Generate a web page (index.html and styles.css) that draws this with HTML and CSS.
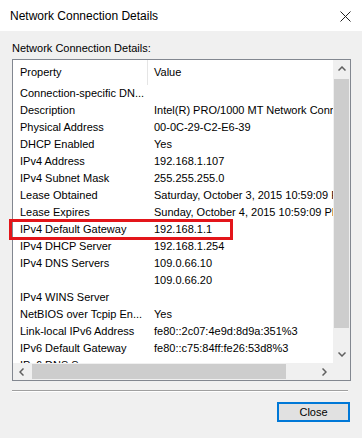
FILE: index.html
```
<!DOCTYPE html>
<html>
<head>
<meta charset="utf-8">
<link rel="stylesheet" href="styles.css">
</head>
<body>
<div class="window">
  <div class="titlebar">
    <span class="title">Network Connection Details</span>
    <svg class="close-x" width="11" height="11" viewBox="0 0 11 11"><path d="M0.5 0.5 L10.5 10.5 M10.5 0.5 L0.5 10.5" stroke="#222" stroke-width="1" fill="none"/></svg>
  </div>
  <div class="main">
    <div class="caption">Network Connection Details:</div>
    <div class="listview">
      <div class="lv-body">
        <div class="row header"><div class="c1">Property</div><div class="c2">Value</div></div>
        <div class="row"><div class="c1">Connection-specific DN...</div><div class="c2"></div></div>
        <div class="row"><div class="c1">Description</div><div class="c2">Intel(R) PRO/1000 MT Network Connection</div></div>
        <div class="row"><div class="c1">Physical Address</div><div class="c2">00-0C-29-C2-E6-39</div></div>
        <div class="row"><div class="c1">DHCP Enabled</div><div class="c2">Yes</div></div>
        <div class="row"><div class="c1">IPv4 Address</div><div class="c2">192.168.1.107</div></div>
        <div class="row"><div class="c1">IPv4 Subnet Mask</div><div class="c2">255.255.255.0</div></div>
        <div class="row"><div class="c1">Lease Obtained</div><div class="c2">Saturday, October 3, 2015 10:59:09 PM</div></div>
        <div class="row"><div class="c1">Lease Expires</div><div class="c2">Sunday, October 4, 2015 10:59:09 PM</div></div>
        <div class="row"><div class="c1">IPv4 Default Gateway</div><div class="c2">192.168.1.1</div></div>
        <div class="row"><div class="c1">IPv4 DHCP Server</div><div class="c2">192.168.1.254</div></div>
        <div class="row"><div class="c1">IPv4 DNS Servers</div><div class="c2">109.0.66.10</div></div>
        <div class="row"><div class="c1"></div><div class="c2">109.0.66.20</div></div>
        <div class="row"><div class="c1">IPv4 WINS Server</div><div class="c2"></div></div>
        <div class="row"><div class="c1">NetBIOS over Tcpip En...</div><div class="c2">Yes</div></div>
        <div class="row"><div class="c1">Link-local IPv6 Address</div><div class="c2">fe80::2c07:4e9d:8d9a:351%3</div></div>
        <div class="row"><div class="c1">IPv6 Default Gateway</div><div class="c2">fe80::c75:84ff:fe26:53d8%3</div></div>
        <div class="row"><div class="c1">IPv6 DNS Servers</div><div class="c2"></div></div>
      </div>
      <div class="vscroll">
        <div class="sbtn"><svg width="8" height="5" viewBox="0 0 8 5"><path d="M0.5 4.5 L4 1 L7.5 4.5" stroke="#606060" stroke-width="1.5" fill="none"/></svg></div>
        <div class="vthumb"></div>
        <div class="vspace"></div>
        <div class="sbtn"><svg width="8" height="5" viewBox="0 0 8 5"><path d="M0.5 0.5 L4 4 L7.5 0.5" stroke="#606060" stroke-width="1.5" fill="none"/></svg></div>
      </div>
      <div class="hscroll">
        <div class="sbtn"><svg width="5" height="8" viewBox="0 0 5 8"><path d="M4.5 0.5 L1 4 L4.5 7.5" stroke="#606060" stroke-width="1.5" fill="none"/></svg></div>
        <div class="hthumb"></div>
        <div class="hspace"></div>
        <div class="sbtn"><svg width="5" height="8" viewBox="0 0 5 8"><path d="M0.5 0.5 L4 4 L0.5 7.5" stroke="#606060" stroke-width="1.5" fill="none"/></svg></div>
      </div>
      <div class="corner"></div>
    </div>
    <div class="separator"></div>
    <div class="buttons"><button class="btn">Close</button></div>
  </div>
  <div class="highlight"></div>
</div>
</body>
</html>
```
FILE: styles.css
```
html, body {
  margin: 0;
  padding: 0;
}
body {
  width: 362px;
  height: 438px;
  overflow: hidden;
  background: #f0f0f0;
  font-family: "Liberation Sans", Arial, sans-serif;
  font-size: 11px;
  color: #000;
}
.window {
  position: relative;
  width: 362px;
  height: 438px;
}
.titlebar {
  height: 31px;
  background: #fff;
  display: flex;
  align-items: center;
  justify-content: space-between;
  padding: 0 11px 0 10px;
  box-sizing: border-box;
}
.title {
  font-size: 12px;
  color: #000;
}
.close-x {
  display: block;
  margin-top: 1px;
}
.main {
  padding: 11px 11px 0 12px;
}
.caption {
  line-height: 13px;
  height: 13px;
  margin-bottom: 4px;
}
.listview {
  width: 339px;
  height: 322px;
  box-sizing: border-box;
  border: 1px solid #828790;
  background: #fff;
  display: grid;
  grid-template-columns: 1fr 17px;
  grid-template-rows: 1fr 17px;
}
.lv-body {
  overflow: hidden;
  min-width: 0;
  min-height: 0;
}
.row {
  display: flex;
  height: 17px;
  line-height: 17px;
  white-space: nowrap;
}
.row.header {
  height: 25px;
  line-height: 24px;
}
.c1 {
  width: 135px;
  flex: none;
  box-sizing: border-box;
  padding-left: 7px;
  overflow: hidden;
}
.header .c1 {
  border-right: 1px solid #e5e5e5;
}
.c2 {
  flex: 1;
  padding-left: 6px;
  overflow: hidden;
}
.vscroll {
  background: #f0f0f0;
  display: flex;
  flex-direction: column;
}
.hscroll {
  background: #f0f0f0;
  display: flex;
}
.sbtn {
  width: 17px;
  height: 17px;
  flex: none;
  display: flex;
  align-items: center;
  justify-content: center;
}
.sbtn svg {
  display: block;
}
.vthumb {
  height: 249px;
  margin: 2px 1px 0 1px;
  background: #cdcdcd;
  flex: none;
}
.vspace {
  flex: 1;
}
.hthumb {
  width: 254px;
  margin: 1px 0 1px 2px;
  background: #cdcdcd;
  flex: none;
}
.hspace {
  flex: 1;
}
.corner {
  background: #f0f0f0;
}
.separator {
  margin-top: 9px;
  width: 336px;
  height: 1px;
  background: #a0a0a0;
  border-bottom: 1px solid #fff;
}
.buttons {
  display: flex;
  justify-content: flex-end;
  margin-top: 10px;
  padding-right: 1px;
}
.btn {
  width: 73px;
  height: 20px;
  box-sizing: border-box;
  border: 2px solid #0078d7;
  background: #e1e1e1;
  font-family: "Liberation Sans", Arial, sans-serif;
  font-size: 11px;
  color: #000;
  padding: 0;
  margin: 0;
}
.highlight {
  position: absolute;
  left: 9px;
  top: 219px;
  width: 224px;
  height: 21px;
  box-sizing: border-box;
  border: 3px solid #e3151a;
}
```
